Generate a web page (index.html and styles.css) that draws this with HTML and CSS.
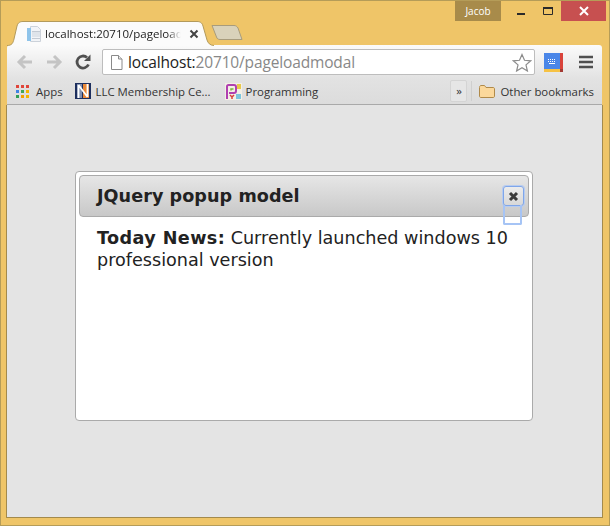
FILE: index.html
```html
<!DOCTYPE html>
<html lang="en">
<head>
  <meta charset="UTF-8">
  <title>localhost:20710/pageloadmodal</title>
  <link rel="stylesheet" href="styles.css">
</head>
<body>
<div class="window">

  <div class="titlebar">
    <span class="user">Jacob</span>
    <span class="win-btn">
      <svg width="12" height="12" viewBox="0 0 12 12"><rect x="2" y="8" width="8" height="2" fill="#2a2a2a"/></svg>
    </span>
    <span class="win-btn">
      <svg width="12" height="12" viewBox="0 0 12 12"><path d="M1.500 2.500h9v7h-9z" fill="none" stroke="#2a2a2a"/><rect x="1" y="2" width="10" height="2" fill="#2a2a2a"/></svg>
    </span>
    <span class="win-btn win-close">
      <svg width="12" height="12" viewBox="0 0 12 12"><path d="M2 2l8 8M10 2l-8 8" stroke="#fff" stroke-width="2"/></svg>
    </span>
  </div>

  <div class="tabstrip">
    <div class="tab">
      <svg class="tab-shape" width="207" height="25" viewBox="0 0 207 25"><path d="M0 24.500C5 24.500 6 22 7 18L10 5C11 1.500 13 0.500 16 0.500H190C193 0.500 195 1.500 196 5L200 19C201 22 203 24.500 207 24.500" fill="#fbfbfb" stroke="#b39a5b"/></svg>
      <svg class="favicon" width="16" height="18" viewBox="0 0 16 18">
        <path d="M4.500 1.500h7l3 3v12h-10z" fill="#f2f4f7" stroke="#ccd2da"/>
        <rect x="1" y="3" width="4" height="13" fill="#8fc4ea"/>
        <rect x="6" y="7" width="8" height="5" fill="#dfe4ea"/>
        <path d="M6 6.500h8M6 13.500h8" stroke="#c3cad3"/>
      </svg>
      <span class="tab-title">localhost:20710/pageload</span>
      <svg class="tab-x" width="10" height="10" viewBox="0 0 10 10"><path d="M1.500 1.500l7 7M8.500 1.500l-7 7" stroke="#444" stroke-width="2"/></svg>
    </div>
    <svg class="newtab" width="32" height="17" viewBox="0 0 32 17"><path d="M1 1.500H23C25 1.500 26 2.500 27 4L31 15.500H9C7 15.500 6 14.500 5.500 13z" fill="#d9d2ba" stroke="#a89c7c"/></svg>
  </div>

  <div class="chrome">
    <div class="toolbar">
      <svg class="nav" width="20" height="18" viewBox="0 0 20 18"><path d="M17 9H5M10 3L4 9l6 6" fill="none" stroke="#c4c4c4" stroke-width="3"/></svg>
      <svg class="nav" width="20" height="18" viewBox="0 0 20 18"><path d="M3 9h12M10 3l6 6-6 6" fill="none" stroke="#c4c4c4" stroke-width="3"/></svg>
      <svg class="nav reload" width="18" height="18" viewBox="0 0 18 18"><path d="M14.500 11.500A6 6 0 1 1 13 4.500" fill="none" stroke="#505050" stroke-width="2.800"/><path d="M10 8h6.500V1.500z" fill="#505050"/></svg>
      <div class="omnibox">
        <svg width="12" height="15" viewBox="0 0 12 15"><path d="M0.500 0.500h7l3.500 3.500v10.500h-10.500z" fill="#fff" stroke="#8a8a8a"/><path d="M7.500 0.500v3.500h3.500" fill="#e8e8e8" stroke="#8a8a8a"/></svg>
        <span class="url"><span class="host">localhost:</span>20710/pageloadmodal</span>
        <svg class="star" width="20" height="19" viewBox="0 0 20 19"><path d="M10 1.500l2.500 5.800 6.200 0.500-4.700 4.100 1.400 6.100L10 14.800l-5.400 3.200 1.400-6.100-4.700-4.100 6.200-0.500z" fill="#fff" stroke="#8c8c8c" stroke-width="1.200"/></svg>
      </div>
      <svg class="keyboard" width="19" height="19" viewBox="0 0 19 19">
        <rect width="16" height="16" fill="#4a86e8"/>
        <rect y="16" width="16" height="3" fill="#f6c244"/>
        <rect x="16" width="3" height="16" fill="#d9433b"/>
        <rect x="16" y="16" width="3" height="3" fill="#a33a33"/>
        <path d="M4 6.500h8M4 8.500h8" stroke="#fff" stroke-dasharray="1 1"/>
        <rect x="5" y="10" width="6" height="1" fill="#fff"/>
      </svg>
      <svg class="menu" width="14" height="14" viewBox="0 0 14 14"><path d="M0 2h14M0 7h14M0 12h14" stroke="#505050" stroke-width="2.600"/></svg>
    </div>

    <div class="bookmarks">
      <span class="bookmark apps">
        <svg width="13" height="13" viewBox="0 0 13 13">
          <rect width="3" height="3" fill="#e0453a"/><rect x="5" width="3" height="3" fill="#e0453a"/><rect x="10" width="3" height="3" fill="#e0453a"/>
          <rect y="5" width="3" height="3" fill="#3f82e4"/><rect x="5" y="5" width="3" height="3" fill="#3fa757"/><rect x="10" y="5" width="3" height="3" fill="#f4b400"/>
          <rect y="10" width="3" height="3" fill="#2f9e54"/><rect x="5" y="10" width="3" height="3" fill="#f4a000"/><rect x="10" y="10" width="3" height="3" fill="#f4b400"/>
        </svg>
        Apps
      </span>
      <span class="bookmark llc">
        <svg width="16" height="16" viewBox="0 0 16 16">
          <rect width="16" height="16" fill="#1d2f5e"/>
          <rect x="2" y="1" width="5" height="14" fill="#7f8fb0"/>
          <rect x="8" y="1" width="6" height="14" fill="#e98a3a"/>
          <path d="M3.500 15V2M12.500 1v13M3.500 2l9 12" fill="none" stroke="#fff" stroke-width="1.800"/>
        </svg>
        LLC Membership Ce...
      </span>
      <span class="bookmark prog">
        <svg width="17" height="17" viewBox="0 0 17 17">
          <rect width="17" height="17" fill="#f3efe6"/>
          <path d="M2 16V3.500Q2 2 3.500 2H9Q11 2 11 4V8Q11 10 9 10H4" fill="none" stroke="#b040b0" stroke-width="2"/>
          <path d="M6 7.500V6h2.500" fill="none" stroke="#7cb342" stroke-width="1.500"/>
          <rect x="12" y="1" width="4" height="5" fill="#e8c94a"/>
          <rect x="11" y="11" width="5" height="5" fill="#7cc6de"/>
          <path d="M5 12l2 2 2-2M7 14v2" fill="none" stroke="#d8413a" stroke-width="1.500"/>
        </svg>
        Programming
      </span>
      <span class="more">»</span>
      <span class="bar-sep"></span>
      <span class="bookmark other">
        <svg width="16" height="13" viewBox="0 0 16 13"><path d="M0.500 2.500c0-1 0.500-2 1.500-2h3.500l1.500 2h7c1 0 1.500 0.500 1.500 1.500v7c0 1-0.500 1.500-1.500 1.500h-12c-1 0-1.500-0.500-1.500-1.500z" fill="#fbd89b" stroke="#b08a4a"/></svg>
        Other bookmarks
      </span>
    </div>
  </div>

  <div class="page">
    <div class="modal">
      <div class="modal-head">
        <span class="modal-title">JQuery popup model</span>
        <button class="modal-close">
          <svg width="11" height="11" viewBox="0 0 11 11"><path d="M2 2l7 7M9 2l-7 7" stroke="#3a3a3a" stroke-width="3"/></svg>
        </button>
      </div>
      <p class="modal-body"><b>Today News:</b> Currently launched windows 10 professional version</p>
    </div>
  </div>

</div>
</body>
</html>
```

FILE: styles.css
```css
html, body {
  margin: 0;
  padding: 0;
}

body {
  width: 610px;
  height: 526px;
  overflow: hidden;
  font-family: "Open Sans", sans-serif;
}

.window {
  box-sizing: border-box;
  width: 610px;
  height: 526px;
  display: flex;
  flex-direction: column;
  background: #efc568;
  border: 1px solid #b59c58;
  padding: 0 7px 7px 6px;
}

.titlebar {
  height: 20px;
  display: flex;
  justify-content: flex-end;
  align-items: flex-start;
  margin-right: -4px;
}

.user {
  width: 46px;
  height: 20px;
  margin-right: 6px;
  background: #a88b4a;
  color: #fff;
  font-size: 10px;
  line-height: 20px;
  text-align: center;
}

.win-btn {
  width: 27px;
  height: 20px;
  display: flex;
  align-items: center;
  justify-content: center;
}

.win-close {
  width: 45px;
  background: #c75050;
}

.tabstrip {
  height: 24px;
  display: flex;
  align-items: flex-end;
}

.tab {
  position: relative;
  width: 207px;
  height: 25px;
  margin-bottom: -1px;
  z-index: 1;
  display: flex;
  align-items: center;
  padding-left: 19px;
  box-sizing: border-box;
}

.tab-shape {
  position: absolute;
  left: 0;
  top: 0;
}

.favicon, .tab-title, .tab-x {
  position: relative;
}

.tab-title {
  width: 136px;
  margin-left: 3px;
  font-size: 11.500px;
  white-space: nowrap;
  overflow: hidden;
  color: #222;
  mask-image: linear-gradient(to right, #000 90%, transparent);
}

.tab-x {
  margin-left: 8px;
}

.newtab {
  margin: 0 0 4px -3px;
}

.chrome {
  border-bottom: 1px solid #a9a9a9;
  background: linear-gradient(#fbfbfb, #e2e2e2 34px, #dcdcdc);
  border-radius: 3px 3px 0 0;
}

.toolbar {
  height: 34px;
  display: flex;
  align-items: center;
  padding-left: 8px;
}

.nav {
  margin-right: 9px;
}

.reload {
  margin-left: 1px;
  margin-right: 9px;
}

.omnibox {
  box-sizing: border-box;
  width: 433px;
  height: 26px;
  margin-left: 1px;
  display: flex;
  align-items: center;
  padding: 0 2px 0 8px;
  background: #fff;
  border: 1px solid #bdbdbd;
  border-radius: 2px;
}

.url {
  flex: 1;
  margin-left: 5px;
  font-size: 15.500px;
  letter-spacing: -0.150px;
  color: #888;
  white-space: nowrap;
}

.host {
  color: #222;
}

.keyboard {
  margin-left: 9px;
}

.menu {
  margin-left: 16px;
}

.bookmarks {
  box-sizing: border-box;
  height: 25px;
  display: flex;
  align-items: center;
  padding: 0 0 1px 9px;
  font-size: 11.400px;
  color: #333;
}

.bookmark {
  display: flex;
  align-items: center;
  gap: 5px;
  white-space: nowrap;
}

.bookmark svg {
  flex-shrink: 0;
}

.apps {
  gap: 7px;
  margin-right: 12px;
}

.llc {
  margin-right: 14px;
}

.prog {
  gap: 4px;
}

.more {
  box-sizing: border-box;
  flex-shrink: 0;
  width: 17px;
  height: 22px;
  margin-left: auto;
  line-height: 20px;
  text-align: center;
  background: #e6e6e6;
  border: 1px solid #d4d4d4;
  border-radius: 2px;
}

.bar-sep {
  flex-shrink: 0;
  width: 1px;
  height: 20px;
  margin: 0 7px 0 4px;
  background: #cfcfcf;
}

.other {
  margin-right: 8px;
}

.page {
  flex: 1;
  background: #e4e4e4;
  padding: 66px 68px 0 68px;
  border-bottom: 1px solid #a38a4c;
  border-left: 1px solid #a38a4c;
  border-right: 1px solid #a38a4c;
  margin-left: -1px;
  margin-right: -1px;
}

.modal {
  box-sizing: border-box;
  width: 458px;
  height: 250px;
  padding: 3px;
  background: #fff;
  border: 1px solid #aaa;
  border-radius: 4px;
  font-family: "DejaVu Sans", sans-serif;
}

.modal-head {
  position: relative;
  box-sizing: border-box;
  height: 42px;
  display: flex;
  align-items: center;
  justify-content: space-between;
  padding: 0 4px 0 17px;
  background: linear-gradient(#e6e6e6, #c8c8c8);
  border: 1px solid #aaa;
  border-radius: 4px;
}

.modal-title {
  font-size: 17.600px;
  font-weight: bold;
  letter-spacing: 0.050px;
  color: #222;
}

.modal-close {
  position: relative;
  box-sizing: border-box;
  width: 21px;
  height: 20px;
  padding: 0;
  display: flex;
  align-items: center;
  justify-content: center;
  background: linear-gradient(#ececec, #d8d8d8);
  border: 1px solid #7fa6ea;
  border-radius: 3px;
  box-shadow: 0 0 0 1px #b7ccf0;
}

.modal-close::after {
  content: "";
  position: absolute;
  left: -1px;
  top: 18px;
  width: 15px;
  height: 18px;
  border: 2px solid #a6c4f5;
  border-top: none;
  border-radius: 0 0 2px 2px;
}

.modal-body {
  margin: 10px 13px 0 18px;
  font-size: 17.600px;
  line-height: 22px;
  color: #222;
}

.modal-body b {
  letter-spacing: 0.400px;
}
```
